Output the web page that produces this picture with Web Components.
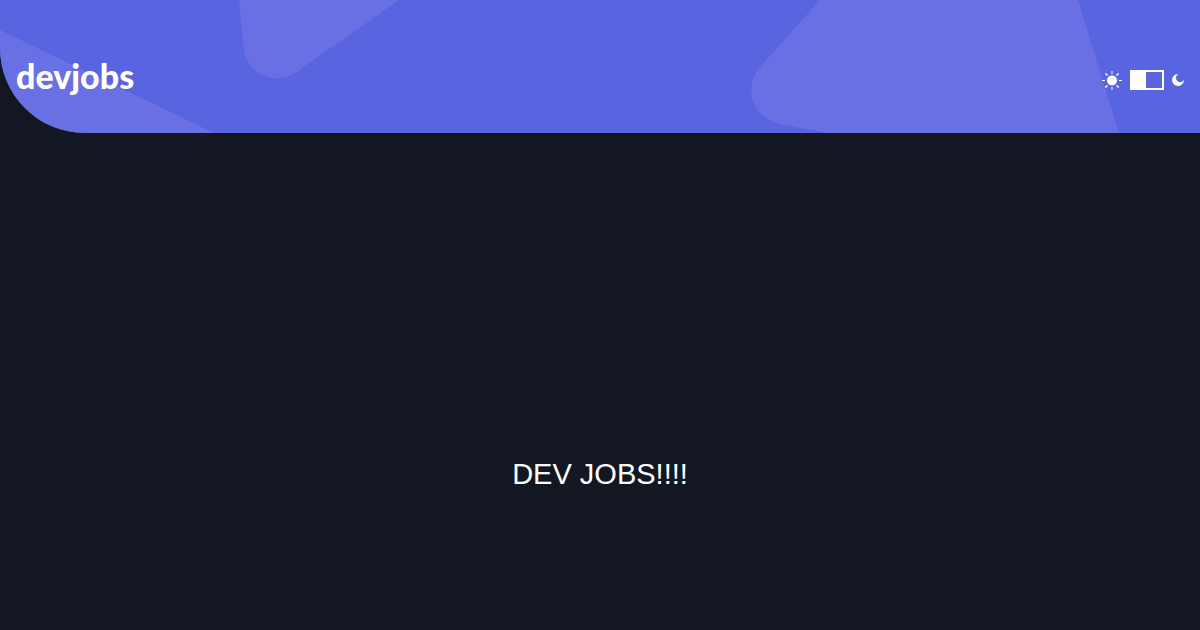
<!DOCTYPE html>
<html lang="en">
<head>
<meta charset="utf-8">
<title>devjobs</title>
<style>
html, body { margin: 0; background: #121721; }
body { font-family: "Liberation Sans", Arial, sans-serif; color: #fff; }
</style>
</head>
<body>
<dev-app></dev-app>
<script>
const define = (name, html) => {
  const template = document.createElement('template');
  template.innerHTML = html;
  customElements.define(name, class extends HTMLElement {
    constructor() {
      super();
      this.attachShadow({ mode: 'open' }).append(template.content.cloneNode(true));
    }
  });
};

define('dev-logo', `
<style>
:host { display: block; }
a { display: block; color: #fff; text-decoration: none; font: 900 34px/24px Lato, sans-serif; }
</style>
<a href="#">devjobs</a>`);

define('theme-switch', `
<style>
:host { display: flex; align-items: center; gap: 8px; height: 32px; }
svg { display: block; fill: #fff; }
input {
  appearance: none; box-sizing: border-box; width: 34px; height: 20px; margin: 0;
  border: 2px solid #fff; background: linear-gradient(#fff, #fff) left / 14px 100% no-repeat;
}
input:checked { background-position: right; }
</style>
<svg width="20" height="20" viewBox="0 0 20 20" aria-hidden="true">
  <circle cx="10" cy="10.400" r="5"/>
  <path d="M0 10h3v1H0zM17 10h3v1h-3z"/>
  <path opacity=".5" d="M9 1h2v3H9zM9 17h2v3H9z"/>
  <path d="M3.300 3.500l2.200 1.800M16.700 3.500l-2.200 1.800M3.300 17.300l2.200-1.800M16.700 17.300l-2.200-1.800" stroke="#fff" stroke-width="1.500"/>
</svg>
<input type="checkbox" aria-label="Dark mode">
<svg width="12" height="12" viewBox="0 0 12 12" aria-hidden="true">
  <path d="M6.780 0.050A4.200 4.200 0 1 0 12 5.800A6 6 0 1 1 6 0Z"/>
</svg>`);

define('site-header', `
<style>
:host { display: block; }
header {
  position: relative; display: flex; align-items: flex-start; justify-content: space-between;
  padding: 64px 16px 37px; overflow: hidden;
  border-bottom-left-radius: 85px; background: #5964e0;
}
.shapes { position: absolute; inset: 0; width: 100%; height: 100%; fill: #6870e3; }
slot { display: contents; }
::slotted(*) { position: relative; }
</style>
<header>
  <svg class="shapes" viewBox="0 0 1200 133" preserveAspectRatio="none" aria-hidden="true">
    <path d="M0 30L214 133H0Z"/>
    <path d="M239 0L243.500 47C246 75 276 87 298 71L399 0Z"/>
    <path d="M820 0L760 67C742 88 753 118 779 123.500L826 133H1119L1078 0Z"/>
  </svg>
  <slot></slot>
</header>`);

define('welcome-message', `
<style>
:host { display: block; padding: 27vw 16px 32px; text-align: center; }
p { margin: 0; font-size: 29px; line-height: 34px; }
</style>
<p><slot></slot></p>`);

define('dev-app', `
<style>:host { display: block; }</style>
<site-header><dev-logo></dev-logo><theme-switch></theme-switch></site-header>
<main><welcome-message>DEV JOBS!!!!</welcome-message></main>`);
</script>
</body>
</html>
